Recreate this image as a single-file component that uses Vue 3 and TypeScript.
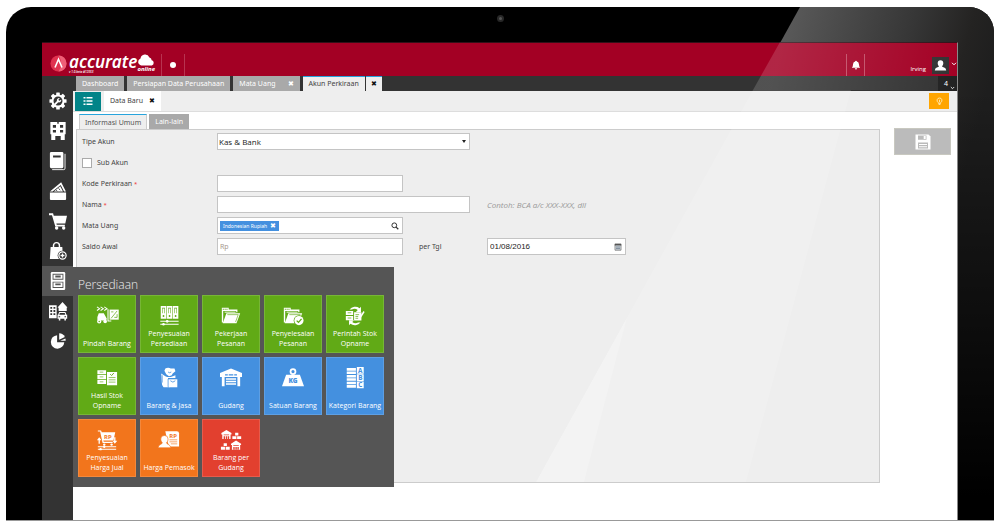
<script setup lang="ts">
import { ref } from 'vue'

interface Tile {
  label: string
  icon: string
  tone: 'green' | 'blue' | 'orange' | 'red'
}

interface NavItem {
  label: string
  icon: string
}

const navItems: NavItem[] = [
  { label: 'Pengaturan', icon: 'gear' },
  { label: 'Perusahaan', icon: 'building' },
  { label: 'Buku Besar', icon: 'book' },
  { label: 'Kas & Bank', icon: 'cards' },
  { label: 'Penjualan', icon: 'cart' },
  { label: 'Pembelian', icon: 'bag' },
  { label: 'Persediaan', icon: 'cabinet' },
  { label: 'Aset Tetap', icon: 'assets' },
  { label: 'Laporan', icon: 'pie' },
]

const tiles: Tile[] = [
  { label: 'Pindah Barang', icon: 'forklift', tone: 'green' },
  { label: 'Penyesuaian Persediaan', icon: 'binders', tone: 'green' },
  { label: 'Pekerjaan Pesanan', icon: 'folder', tone: 'green' },
  { label: 'Penyelesaian Pesanan', icon: 'folderCheck', tone: 'green' },
  { label: 'Perintah Stok Opname', icon: 'stockOrder', tone: 'green' },
  { label: 'Hasil Stok Opname', icon: 'stockResult', tone: 'green' },
  { label: 'Barang & Jasa', icon: 'goods', tone: 'blue' },
  { label: 'Gudang', icon: 'warehouse', tone: 'blue' },
  { label: 'Satuan Barang', icon: 'weight', tone: 'blue' },
  { label: 'Kategori Barang', icon: 'category', tone: 'blue' },
  { label: 'Penyesuaian Harga Jual', icon: 'priceCart', tone: 'orange' },
  { label: 'Harga Pemasok', icon: 'supplier', tone: 'orange' },
  { label: 'Barang per Gudang', icon: 'perWarehouse', tone: 'red' },
]

const teeth = [0, 45, 90, 135, 180, 225, 270, 315]
  .map((a) => `<rect x="8" y="0.500" width="4" height="4" rx="0.6" transform="rotate(${a} 10 10)"/>`)
  .join('')

const navIcons: Record<string, string> = {
  gear: `${teeth}<circle cx="10" cy="10" r="7.300"/><circle cx="10" cy="10" r="5" fill="var(--bg)"/>
    <path d="M5.6 13.2l3.2-3.2a2.6 2.6 0 0 1 3.3-3.2l-1.5 1.6.3 1 1 .3 1.6-1.5a2.6 2.6 0 0 1-3.2 3.3l-3.2 3.2z"/>`,
  building: `<path d="M1.500 0h17v13.500h-1V20h-4.500v-4.500H7V20H2.500v-6.500h-1z"/>
    <g fill="var(--bg)"><path d="M9.200 0h1.600v2H9.200zM4.300 3.300h3.500v3H4.300zM12.200 3.300h3.500v3h-3.500zM4.300 8.800h3.500v3H4.300zM12.200 8.800h3.500v3h-3.500z"/></g>`,
  book: `<path d="M2.500 0h12A1.500 1.500 0 0 1 16 1.500v15a1.500 1.500 0 0 1-1.500 1.500h-12A1.500 1.500 0 0 1 1 16.500v-15A1.500 1.500 0 0 1 2.500 0z"/>
    <path d="M17.800 2v16a1.500 1.500 0 0 1-1.500 1.600H3.500" fill="none" stroke="#fff" stroke-width="1"/>
    <path fill="var(--bg)" d="M4.500 4h8.500v2H4.500z"/>`,
  cards: `<path d="M1 11.700h18V19a1 1 0 0 1-1 1H2a1 1 0 0 1-1-1z"/>
    <path d="M1 10.600 13.500.3l5.300 10.300h-2.100L13 3.200 4 10.600z"/><path d="M5.500 10.600l7-6 3 6z"/>
    <path d="M10.500 7l2 2M8 9l1.300 1.300" stroke="var(--bg)" fill="none"/>`,
  cart: `<path d="M0 1.500h4.500l.8 2.600H20l-1.900 8.700H8.200l.4 1.500h9v1.700H7L3.300 3.500H0z"/><circle cx="8.500" cy="17.700" r="1.900"/><circle cx="16.300" cy="17.700" r="1.900"/>`,
  bag: `<path d="M1.800 5.500h13l.8 13.500H1z"/><path d="M5 8V4a3.300 3.300 0 0 1 6.600 0v4" fill="none" stroke="#fff" stroke-width="1.600"/>
    <circle cx="15" cy="15" r="5.400" fill="var(--bg)"/><circle cx="15" cy="15" r="4" fill="none" stroke="#fff" stroke-width="1.400"/>
    <path d="M12.800 14.300h4.400v1.400h-4.400zM14.300 12.800h1.400v4.400h-1.400z"/>`,
  cabinet: `<rect x="2" y="0" width="16" height="20" rx="1.500"/>
    <path fill="var(--bg)" d="M4 2h12v6.500H4zM4 10.700h12v7H4z"/>
    <path d="M5 3h10v4.500H5zM5 11.700h10v5H5z"/><path fill="var(--bg)" d="M7 4h6v2H7zM7 12.700h6v2H7z"/>`,
  assets: `<path d="M0 3.500h8.500V18H0zM9.500 6 15 0l5.500 6-.8.500V10h-9V6.500z"/><path d="M11.300 11h6.900l1.200 3.300h.8v4.400h-1.400V20.500h-1.700v-1.800h-4.500v1.800h-1.700v-1.800H9.500v-4.400h.7z"/>
    <path fill="var(--bg)" d="M1.500 5.500h2v2h-2zM5 5.500h2v2H5zM1.500 9h2v2h-2zM5 9h2v2H5zM1.500 12.500h2v2h-2zM5 12.500h2v2H5zM12 12.200h5.500l.6 1.900h-6.700zM10.700 15.800h1.700v1.200h-1.700zM17.200 15.800h1.700v1.200h-1.700z"/>`,
  pie: `<path d="M9 3.500v8h8A7.500 7.500 0 1 1 9 3.500z"/><path d="M11.300 1.500a7 7 0 0 1 6.300 4L11.300 8.500z"/><path d="M12.500 9.700l5.700-2.600q.4 1.200.3 2.600z"/>`,
}

const folderBase = `<path d="M2 3h7.500v2H19v3h-1.300V6.500H3.500V19H2z"/><path d="M7 9h15l-4 11H3z"/><path d="M8 10.500h11.900l-2.900 8" fill="none" stroke="var(--bg)" stroke-width=".7"/>
  <path fill="var(--bg)" d="M3 4.200h1.200v1H3zM5 4.200h1.200v1H5zM7 4.200h1.200v1H7z"/><path d="M5 7.300h12v1H5z"/>`
const house = (x: number, y: number) =>
  `<g transform="translate(${x} ${y})"><path d="M0 3.500 5.500 0 11 3.500V5h-1v5H1V5H0z"/><path fill="var(--bg)" d="M2.500 5h6v.8h-6zM2.500 7h1.500v3H2.500zM4.800 7h1.500v3H4.800zM7 7h1.500v3H7z"/></g>`
const boxes = (x: number, y: number) =>
  `<g transform="translate(${x} ${y})"><path d="M3 0h3.500v3H3zM0 3.800h4.400V7H0zM5.200 3.800h4.400V7H5.200z"/></g>`

const tileIcons: Record<string, string> = {
  forklift: `<path d="M1 2l3 2-3 2M5 2l3 2-3 2M9 2l3 2-3 2" fill="none" stroke="#fff" stroke-width="1.100"/>
    <path d="M3 9h5.500l3 5.500V17H1.500v-4z"/><circle cx="3.500" cy="18" r="2.300"/><circle cx="10" cy="18" r="2"/><path d="M12.500 4.500h1.200V17h3v1h-4.200z"/>
    <path d="M14.800 5h10v11h-10z"/><path d="M16.500 14.500l6.500-8M16.500 7.500h2.500M23 10v3.500h-3" fill="none" stroke="var(--bg)" stroke-width=".8"/><circle cx="3.500" cy="18" r=".8" fill="var(--bg)"/>`,
  binders: `<path d="M3 1h6v14H3zM9.600 1h6v14h-6zM16.200 1h6v14h-6z"/>
    <path fill="var(--bg)" d="M4.500 3h3v.8h-3zM11.100 3h3v.8h-3zM17.700 3h3v.8h-3zM4.500 3h.6v6h-.6zM7 3h.6v6H7zM11.100 3h.6v6h-.6zM13.500 3h.6v6h-.6zM17.700 3h.6v6h-.6zM20.100 3h.6v6h-.6z"/><circle cx="6" cy="12" r="1" fill="var(--bg)"/><circle cx="12.600" cy="12" r="1" fill="var(--bg)"/><circle cx="19.200" cy="12" r="1" fill="var(--bg)"/>
    <path d="M2.500 17.300h20v1h-20zM2.500 20.500h20v1h-20z"/><circle cx="10" cy="17.800" r="1.500"/><circle cx="6" cy="21" r="1.400"/>`,
  folder: folderBase,
  folderCheck: `${folderBase}<circle cx="18.500" cy="17" r="5.800" fill="var(--bg)"/><circle cx="18.500" cy="17" r="5"/><path d="M16 17l2 2 3.300-3.800" fill="none" stroke="var(--bg)" stroke-width="1.400"/>`,
  stockOrder: `<path d="M6 5a8 8 0 0 1 11-1.500L18.500 2v5.500H13l2-2A6 6 0 0 0 8.500 5zM18 19a8 8 0 0 1-11 1.500L5.500 22v-5.500H11l-2 2a6 6 0 0 0 6.500.5z"/>
    <path d="M2 6.500h8V11H2zM2 12h8v4.500H2zM11 8h8v9h-8z"/><path d="M12.500 10.500h4M12.500 12.500h3M12.500 14.500h3M4 8.500h4M4 14.200h4" stroke="var(--bg)" stroke-width=".8"/><path d="M22.500 7.500l-5 8-1.500 1 .2-2 5-8z"/>`,
  stockResult: `<path d="M1.500 3.500H11v4.300H1.500zM1.500 8.700H11v4.300H1.500zM1.500 13.900H11v4.600H1.500zM12 5.500h11V20H12z"/>
    <path d="M13.800 11.500h7.500M13.800 14h7.500M13.800 16.500h7.500M4 5.600h4M4 10.800h4M4 16.200h4" stroke="var(--bg)" stroke-width=".7"/><path d="M15.500 7.800l1.500 1.500 2.500-2.800" fill="none" stroke="var(--bg)"/>`,
  goods: `<path d="M8 1.500q3-1.500 6 0h4l1 3-3 2.500-1 2-3 1-3-2-2-4z"/><path d="M3.500 7 8 10l2 1h4l5-2v3h-8v7l2 3H6q-2-2-2-6z"/>
    <path d="M11 13h10.500v8q0 1.500-1.500 1.500h-7.500q-1.500 0-1.500-1.500z" stroke="var(--bg)" stroke-width=".8"/><path d="M13.500 15q2.700 3 5.400 0M4.500 9v8M3.500 4l3 4M11 5.500q1.500 1.500 3.500 0" fill="none" stroke="var(--bg)" stroke-width=".9"/>`,
  warehouse: `<path d="M12 1.500 0 6.500V11h2v10h3V11h14v10h3V11h2V6.500z"/><path d="M6.500 12.200h11v1.700h-11zM6.500 14.900h11v1.700h-11zM6.500 17.600h11v1.700h-11z"/>
    <path fill="var(--bg)" d="M5.500 8h3v1.300h-3zM9.500 8h5v1.300h-5zM15.500 8h3v1.300h-3z"/>`,
  weight: `<path d="M4.500 8.500h15l4.500 12.500H0z"/><circle cx="12" cy="5" r="2.700" fill="none" stroke="#fff" stroke-width="1.900"/>
    <text x="12" y="17.500" text-anchor="middle" font-size="7" font-weight="800" fill="var(--bg)">KG</text>`,
  category: `<path d="M3 1h10v3H3zM3 4.800h10v2.800H3zM3 8.600h10v2.800H3zM3 12.200h10V15H3zM3 16h10v2.800H3zM3 19.600h10v3H3z"/><path d="M14 0h7.500v7.400H14zM14 8h7.500v7.200H14zM14 15.800h7.500v7.500H14z"/>
    <g fill="var(--bg)" font-size="7" font-weight="700" text-anchor="middle"><text x="17.800" y="6.300">A</text><text x="17.800" y="14.200">B</text><text x="17.800" y="22.200">C</text></g>`,
  priceCart: `<path d="M2 1.500h3.500l.8 2H21l-2 9H8l.4 1.500h9.800v1.300H7.200L4.500 2.800H2z"/><circle cx="9" cy="17" r="1.300"/><circle cx="17" cy="17" r="1.300"/>
    <text x="13" y="10.700" text-anchor="middle" font-size="6.500" font-weight="700" fill="var(--bg)">RP</text>
    <path d="M3.500 9 1 12.300h1.800V16h1.400v-3.700H6zM20.500 16l2.700-3.300h-2V9h-1.400v3.700H18zM2 18.800h20v1H2zM2 21.500h20v1H2z"/><circle cx="9" cy="19.300" r="1.300"/><circle cx="5" cy="22" r="1.300"/>`,
  supplier: `<path d="M8 2.500h12.500q2.500 0 2.500 2.500v14H12.500L10 13z"/><path d="M12.500 11.800h8.500M12.500 14h8.500M14 16.200h7" stroke="var(--bg)" stroke-width=".7"/>
    <text x="16.500" y="9.800" text-anchor="middle" font-size="6.500" font-weight="700" fill="var(--bg)">RP</text>
    <path d="M7 7q4 0 4 4 0 2.500-1.700 4 .2 1.300 2.200 2 2 .800 2.500 3.500H0q.5-2.700 2.500-3.500 2-.7 2.200-2Q3 13.500 3 11q0-4 4-4z" stroke="var(--bg)" stroke-width=".7"/>`,
  perWarehouse: `${house(1.5, 1)}${boxes(13.5, 4)}${boxes(1, 15.500)}${house(12, 12.500)}`,
}

const activeNav = ref('cabinet')
const accountType = ref('Kas & Bank')
const isSub = ref(false)
const code = ref('')
const accountName = ref('')
const currencyQuery = ref('')
const balance = ref('')
const asOf = ref('01/08/2016')
</script>

<template>
  <div class="device">
    <svg class="bezel-shine" viewBox="0 0 988 514" preserveAspectRatio="none" aria-hidden="true">
      <defs>
        <linearGradient id="bezelTop" gradientUnits="userSpaceOnUse" x1="775" y1="0" x2="988" y2="60">
          <stop offset="0" stop-color="#5c5c5c" />
          <stop offset=".6" stop-color="#363636" />
          <stop offset=".85" stop-color="#242322" />
          <stop offset="1" stop-color="#1e1e1e" />
        </linearGradient>
        <linearGradient id="bezelFade" x1="0" y1="0" x2="0" y2="1">
          <stop offset=".1" stop-color="#000" stop-opacity="0" />
          <stop offset=".95" stop-color="#000" />
        </linearGradient>
      </defs>
      <path d="M794 0h194v514H509z" fill="url(#bezelTop)" />
      <path d="M952 36h36v478h-36z" fill="url(#bezelFade)" />
    </svg>
    <span class="camera"></span>

    <div class="screen">
      <header class="topbar">
        <div class="brand">
          <svg class="brand-mark" viewBox="0 0 18 18" aria-hidden="true">
            <circle cx="9" cy="9" r="8.500" fill="#e0324f" />
            <path d="M9 .5a8.500 8.500 0 0 1 0 17 14 14 0 0 0 0-17z" fill="#ee6077" />
            <path d="M5.300 13.200 9 4.500l3.700 8.700" fill="none" stroke="#fff" stroke-width="1.700" />
          </svg>
          <div class="brand-name">
            <span class="brand-word">accurate</span>
            <span class="brand-version">v 1.0.beta #12353</span>
          </div>
          <div class="brand-cloud">
            <svg viewBox="0 0 20 13" aria-hidden="true">
              <path d="M4.500 12.500a4 4 0 0 1-.6-7.700 5.200 5.200 0 0 1 9.900-1.200 3.700 3.700 0 0 1 2.500 3.300 2.900 2.900 0 0 1 .2 5.600z" fill="#fff" />
            </svg>
            <span>online</span>
          </div>
        </div>
        <button class="dot-button" type="button" aria-label="Status"><span></span></button>
        <div class="topbar-right">
          <button class="bell" type="button" aria-label="Notifikasi">
            <svg viewBox="0 0 10 10" aria-hidden="true"><path d="M5 .8q.8 0 .9.800Q8 2.300 8 4.500q0 2.300 1.200 3.300H.8Q2 6.800 2 4.500 2 2.300 4.100 1.600 4.200.8 5 .8zM3.800 8.200h2.400Q6 9.400 5 9.400T3.800 8.200z" fill="#fff" /></svg>
          </button>
          <span class="user-name">Irving</span>
          <button class="avatar" type="button" aria-label="Akun pengguna">
            <svg viewBox="0 0 12 12" aria-hidden="true"><path d="M6 1.200q2.600 0 2.600 2.700 0 1.700-1.200 2.700.2.700 2 1.200 1.700.5 1.900 2.700H.7Q.9 8.300 2.600 7.800q1.800-.5 2-1.200-1.200-1-1.200-2.700 0-2.700 2.600-2.700z" fill="#fff" /></svg>
          </button>
          <svg class="chevron" viewBox="0 0 6 4" aria-hidden="true"><path d="M1 .8l2 2 2-2" fill="none" stroke="#fff" /></svg>
        </div>
      </header>

      <div class="body">
        <nav class="sidebar" aria-label="Modul">
          <button
            v-for="item in navItems"
            :key="item.icon"
            type="button"
            :class="['nav-item', { active: item.icon === activeNav }]"
            :aria-label="item.label"
            @click="activeNav = item.icon"
          >
            <svg viewBox="0 0 20 20" fill="#fff" aria-hidden="true" v-html="navIcons[item.icon]"></svg>
          </button>
        </nav>

        <main class="main">
          <div class="tabs">
            <button class="tab" type="button">Dashboard</button>
            <button class="tab" type="button">Persiapan Data Perusahaan</button>
            <div class="tab-group">
              <button class="tab" type="button">Mata Uang</button>
              <button class="tab close" type="button" aria-label="Tutup Mata Uang">✖</button>
            </div>
            <div class="tab-group current">
              <button class="tab" type="button">Akun Perkiraan</button>
              <button class="tab close" type="button" aria-label="Tutup Akun Perkiraan">✖</button>
            </div>
            <button class="tab-count" type="button">
              <span>4</span>
              <svg viewBox="0 0 6 4" aria-hidden="true"><path d="M1 .8l2 2 2-2" fill="none" stroke="#fff" /></svg>
            </button>
          </div>

          <div class="subtabs">
            <button class="list-button" type="button" aria-label="Daftar">
              <svg viewBox="0 0 10 10" aria-hidden="true"><path d="M.5 1h2v1.500h-2zM3.500 1h6v1.500h-6zM.5 4.300h2v1.500h-2zM3.500 4.300h6v1.500h-6zM.5 7.600h2v1.500h-2zM3.500 7.600h6v1.500h-6z" fill="#fff" /></svg>
            </button>
            <div class="doc-tab">
              <button type="button">Data Baru</button>
              <button class="doc-close" type="button" aria-label="Tutup Data Baru">✖</button>
            </div>
            <button class="hint-button" type="button" aria-label="Petunjuk">
              <svg viewBox="0 0 8 10" aria-hidden="true"><path d="M4 1a2.700 2.700 0 0 1 1.500 5L5.200 7.200H2.800L2.500 6A2.700 2.700 0 0 1 4 1zM3 8.400h2M4 3v3" fill="none" stroke="#fff3cf" stroke-width=".9" /></svg>
            </button>
          </div>

          <div class="workspace">
            <section class="form-area">
              <div class="form-tabs">
                <button class="form-tab selected" type="button">Informasi Umum</button>
                <button class="form-tab" type="button">Lain-lain</button>
              </div>
              <form class="panel" @submit.prevent>
                <div class="row">
                  <label for="type">Tipe Akun</label>
                  <span class="select-box wide">
                    <select id="type" v-model="accountType" class="field">
                      <option>Kas &amp; Bank</option>
                      <option>Piutang</option>
                      <option>Persediaan</option>
                    </select>
                  </span>
                </div>
                <div class="row">
                  <label class="check-label"><input v-model="isSub" type="checkbox" />Sub Akun</label>
                </div>
                <div class="row">
                  <label for="code">Kode Perkiraan <i>*</i></label>
                  <input id="code" v-model="code" class="field" type="text" />
                </div>
                <div class="row">
                  <label for="name">Nama <i>*</i></label>
                  <input id="name" v-model="accountName" class="field wide" type="text" />
                  <em class="example">Contoh: BCA a/c XXX-XXX, dll</em>
                </div>
                <div class="row">
                  <label for="currency">Mata Uang</label>
                  <div class="field picker">
                    <span class="chip">Indonesian Rupiah <button type="button" aria-label="Hapus mata uang">✖</button></span>
                    <input id="currency" v-model="currencyQuery" type="text" />
                    <button type="button" aria-label="Cari mata uang">
                      <svg viewBox="0 0 8 8" aria-hidden="true"><circle cx="3.300" cy="3.300" r="2.400" fill="none" stroke="#333" /><path d="M5.100 5.100l2.200 2.200" stroke="#333" stroke-width="1.300" /></svg>
                    </button>
                  </div>
                </div>
                <div class="row">
                  <label for="balance">Saldo Awal</label>
                  <div class="balance">
                    <input id="balance" v-model="balance" class="field" type="text" placeholder="Rp" />
                    <label for="date">per Tgl</label>
                  </div>
                  <div class="field picker date">
                    <input id="date" v-model="asOf" type="text" />
                    <button type="button" aria-label="Pilih tanggal">
                      <svg viewBox="0 0 8 8" aria-hidden="true"><path d="M1 1.200h6v6H1z" fill="#dde5ea" stroke="#777" stroke-width=".8" /><path d="M.8.800h6.400v1.600H.8z" fill="#555" /><path d="M2 4h4M2 5.700h4" stroke="#567" stroke-width=".8" /></svg>
                    </button>
                  </div>
                </div>
              </form>
            </section>
            <button class="save" type="button" aria-label="Simpan">
              <svg viewBox="0 0 16 16" aria-hidden="true"><path d="M.5.500h13l2 2v13H.5z" fill="#fff" /><path d="M3 1.500h8.500v4.300H3zM3 8.500h10v6H3z" fill="#bbb" /><path d="M8.700 2h2v3h-2zM4 10h8v1H4zM4 12.300h8v1H4z" fill="#fff" /></svg>
            </button>
          </div>
        </main>

        <section class="menu" aria-label="Menu Persediaan">
          <h2>Persediaan</h2>
          <div class="tiles">
            <button v-for="tile in tiles" :key="tile.label" type="button" :class="['tile', tile.tone]">
              <svg viewBox="0 0 24 24" fill="#fff" aria-hidden="true" v-html="tileIcons[tile.icon]"></svg>
              <span>{{ tile.label }}</span>
            </button>
          </div>
        </section>
      </div>
    </div>

    <svg class="glare" viewBox="0 0 916 479" preserveAspectRatio="none" aria-hidden="true">
      <defs>
        <linearGradient id="glareFill" gradientUnits="userSpaceOnUse" x1="740" y1="0" x2="916" y2="40">
          <stop offset="0" stop-color="#fff" stop-opacity=".15" />
          <stop offset="1" stop-color="#fff" stop-opacity="0" />
        </linearGradient>
      </defs>
      <path d="M738 0h178v48H711z" fill="url(#glareFill)" />
      <path d="M711 48h98L704 441H494z" fill="#fff" fill-opacity=".14" />
      <path d="M585 276 494 441h48z" fill="#fff" fill-opacity=".2" />
    </svg>
  </div>
</template>

<style>
body {
  margin: 0;
  background: #fff;
}
</style>

<style scoped>
* {
  box-sizing: border-box;
}

.device {
  --ui: 'Noto Sans', 'Open Sans', 'Liberation Sans', sans-serif;
  --narrow: 'Open Sans', 'Noto Sans', 'Liberation Sans', sans-serif;
  position: relative;
  display: flex;
  flex-direction: column;
  min-height: calc(100vh - 7px);
  margin: 7px 6px 0;
  padding: 35px 36px 0;
  border-bottom: 1px solid #999;
  border-radius: 25px 25px 0 0;
  overflow: hidden;
  background: #000;
  color: #444;
  font-family: var(--ui);
  font-size: 7px;
  line-height: 10px;
}

button,
input,
select {
  margin: 0;
  padding: 0;
  border: 0;
  border-radius: 0;
  background: none;
  color: inherit;
  font: inherit;
}

button {
  cursor: pointer;
}

svg {
  display: block;
}

.bezel-shine {
  position: absolute;
  inset: 0;
  width: 100%;
  height: 100%;
}

.glare {
  position: absolute;
  inset: 35px 36px 0;
  width: calc(100% - 72px);
  height: calc(100% - 35px);
  pointer-events: none;
}

.camera {
  position: absolute;
  top: 8px;
  left: calc(50% - 3px);
  width: 7px;
  height: 7px;
  border: 2px solid #282828;
  border-radius: 50%;
  background: #555;
}

.screen {
  position: relative;
  display: flex;
  flex: 1;
  flex-direction: column;
  border-top: 1px solid #331018;
  border-right: 1px solid #888;
  background: #fff;
}

.topbar {
  display: flex;
  align-items: flex-end;
  height: 33px;
  background: #a30024;
  color: #fff;
}

.brand {
  display: flex;
  align-items: flex-start;
  width: 120px;
  height: 22px;
  padding-left: 8px;
  border-right: 1px solid #b83350;
}

.brand-mark {
  width: 17px;
  height: 17px;
  margin-top: 1px;
}

.brand-name {
  display: flex;
  flex-direction: column;
  padding-left: 2px;
}

.brand-word {
  font-size: 17px;
  font-style: italic;
  font-weight: 600;
  line-height: 16px;
}

.brand-version {
  font-family: var(--narrow);
  font-size: 3px;
  font-style: italic;
  font-weight: 600;
  line-height: 4px;
}

.brand-cloud {
  display: flex;
  flex-direction: column;
  align-items: center;
  font-size: 6px;
  font-style: italic;
  font-weight: 700;
  line-height: 6px;
}

.brand-cloud svg {
  width: 18px;
  height: 12px;
}

.dot-button {
  display: grid;
  place-items: center;
  width: 23px;
  height: 22px;
  border-right: 1px solid #b83350;
}

.dot-button span {
  width: 6px;
  height: 6px;
  border-radius: 50%;
  background: #fff;
}

.topbar-right {
  display: flex;
  align-items: center;
  height: 22px;
  margin-left: auto;
}

.bell {
  display: grid;
  place-items: center;
  width: 19px;
  height: 22px;
  margin-right: 45px;
  border: solid #c04a63;
  border-width: 0 1px;
}

.bell svg {
  width: 10px;
  height: 10px;
}

.user-name {
  align-self: flex-end;
  padding: 0 6px 2px 0;
  font-family: var(--narrow);
  font-size: 6px;
}

.avatar {
  display: grid;
  place-items: center;
  width: 17px;
  height: 17px;
  background: #333;
}

.avatar svg {
  width: 13px;
  height: 13px;
}

.chevron {
  width: 6px;
  height: 4px;
  margin: 0 0 2px 2px;
}

.body {
  position: relative;
  display: flex;
  flex: 1;
}

.sidebar {
  flex: none;
  width: 31px;
  padding-top: 10px;
  background: #333;
}

.nav-item {
  --bg: #333;
  display: grid;
  place-items: center;
  width: 100%;
  height: 30px;
}

.nav-item.active {
  --bg: #555;
  background: #555;
}

.nav-item svg {
  width: 18px;
  height: 18px;
  overflow: visible;
}

.main {
  display: flex;
  flex: 1;
  flex-direction: column;
  min-width: 0;
}

.tabs {
  display: flex;
  gap: 3px;
  height: 15px;
  padding-left: 3px;
  background: #333;
}

.tab {
  height: 15px;
  padding: 0 6px;
  background: #a9a9a9;
  color: #fff;
  white-space: nowrap;
}

.tab-group {
  display: flex;
}

.current {
  gap: 1px;
}

.current .tab {
  border-top: 1px solid #27a4dd;
  background: #eee;
  color: #444;
}

.current .close {
  padding: 0 5px;
  color: #111;
}

.tab-count {
  display: flex;
  align-items: center;
  gap: 2px;
  width: 19px;
  margin-left: auto;
  padding-left: 6px;
  background: #222;
  color: #fff;
}

.tab-count svg {
  width: 5px;
  height: 4px;
  margin-top: 9px;
  flex: none;
}

.subtabs {
  display: flex;
  align-items: center;
  height: 21px;
  padding: 0 8px 0 2px;
  border-bottom: 1px solid #ddd;
  background: #eee;
}

.list-button {
  display: grid;
  place-items: center;
  width: 26px;
  height: 19px;
  background: #028488;
}

.list-button svg {
  width: 10px;
  height: 10px;
}

.doc-tab {
  display: flex;
  align-items: center;
  gap: 6px;
  height: 20px;
  margin-left: 3px;
  padding: 0 6px;
  background: #fff;
}

.doc-close {
  color: #111;
}

.hint-button {
  display: grid;
  place-items: center;
  width: 20px;
  height: 16px;
  margin-left: auto;
  background: #ffa500;
}

.hint-button svg {
  width: 7px;
  height: 9px;
}

.workspace {
  display: flex;
  flex: 1;
  align-items: flex-start;
  gap: 14px;
  padding: 2px 6px 37px 3px;
}

.form-area {
  display: flex;
  flex: 1;
  flex-direction: column;
  align-self: stretch;
}

.form-tabs {
  display: flex;
  gap: 2px;
  padding-left: 3px;
}

.form-tab {
  height: 15px;
  padding: 0 6px;
  background: #a9a9a9;
  color: #fff;
}

.form-tab.selected {
  height: 16px;
  margin-bottom: -1px;
  border: solid #ccc;
  border-width: 1px 1px 0;
  border-top-color: #27a4dd;
  padding: 0 5px;
  background: #eee;
  color: #555;
}

.panel {
  display: flex;
  flex: 1;
  flex-direction: column;
  gap: 4px;
  padding: 3px 5px;
  border: 1px solid #ccc;
  background: #eee;
}

.row {
  display: grid;
  grid-template-columns: 135px 270px 1fr;
  align-items: center;
  min-height: 17px;
}

.row i {
  color: #e33;
  font-size: 6px;
  font-style: normal;
}

.field {
  width: 186px;
  height: 17px;
  padding: 0 2px;
  border: 1px solid #c4c4c4;
  background: #fff;
  color: #222;
}

.wide {
  width: 253px;
}

.select-box {
  position: relative;
}

.select-box select {
  width: 100%;
  appearance: none;
  padding: 0 1px;
  font-family: var(--narrow);
  font-size: 8px;
}

.select-box::after {
  position: absolute;
  top: 7px;
  right: 4px;
  border: solid transparent;
  border-width: 3px 2px 0;
  border-top-color: #222;
  content: '';
  pointer-events: none;
}

.check-label {
  display: flex;
  align-items: center;
  gap: 5px;
}

.check-label input {
  width: 10px;
  height: 10px;
  border: 1px solid #aaa;
  appearance: none;
  background: #fff;
}

.check-label input:checked {
  background: #4490df;
}

.example {
  color: #999;
  font-family: var(--narrow);
  font-size: 8px;
}

.picker {
  display: flex;
  align-items: center;
  padding: 0 3px 0 2px;
}

.picker input {
  flex: 1;
  min-width: 0;
}

.picker svg {
  width: 8px;
  height: 8px;
}

.chip {
  display: flex;
  align-items: center;
  gap: 3px;
  height: 10px;
  padding: 0 3px;
  background: #4490df;
  color: #fff;
  font-size: 5px;
  white-space: nowrap;
}

.chip button {
  font-size: 7px;
}

.balance {
  display: flex;
  align-items: center;
  gap: 16px;
}

.balance .field::placeholder {
  color: #a89a90;
}

.date {
  width: 139px;
  font-family: 'Liberation Sans', Arial, sans-serif;
  font-size: 8px;
}

.save {
  display: grid;
  place-items: center;
  width: 57px;
  height: 27px;
  margin-top: 14px;
  border: 1px solid #c8c8c0;
  background: #bbb;
}

.save svg {
  width: 16px;
  height: 16px;
}

.menu {
  position: absolute;
  top: 191px;
  left: 31px;
  width: 321px;
  padding: 12px 10px 10px 5px;
  background: #555;
  color: #fff;
}

.menu h2 {
  margin: 0 0 4px;
  color: #eee;
  font-family: var(--narrow);
  font-size: 12px;
  font-weight: 300;
  line-height: 12px;
}

.tiles {
  display: grid;
  grid-template-columns: repeat(5, 58px);
  gap: 4px;
}

.tile {
  display: flex;
  flex-direction: column;
  align-items: center;
  justify-content: space-between;
  height: 58px;
  padding: 9px 0 3px;
  border: 1px solid rgb(255 255 255 / 14%);
  background: var(--bg);
  font-family: var(--narrow);
  text-align: center;
}

.tile svg {
  width: 22px;
  height: 22px;
  flex: none;
  overflow: visible;
}

.green {
  --bg: #61aa16;
}

.blue {
  --bg: #4490df;
}

.orange {
  --bg: #f2751c;
}

.red {
  --bg: #e2402f;
}
</style>
